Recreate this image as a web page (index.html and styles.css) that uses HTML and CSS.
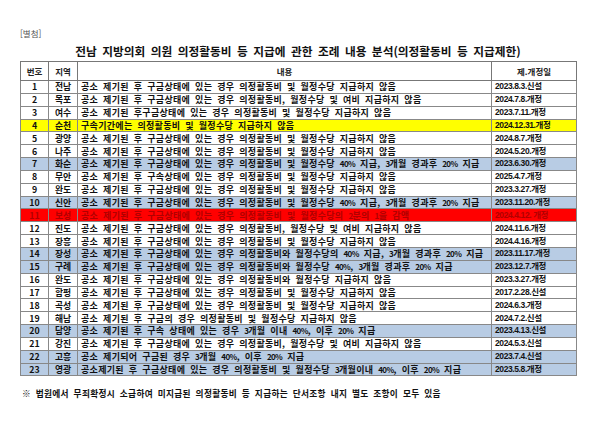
FILE: index.html
```html
<!DOCTYPE html>
<html lang="ko">
<head>
<meta charset="utf-8">
<link rel="stylesheet" href="styles.css">
</head>
<body>
<div class="page">
  <div class="attach">[별첨]</div>
  <h1 class="title">전남 지방의회 의원 의정활동비 등 지급에 관한 조례 내용 분석(의정활동비 등 지급제한)</h1>
  <table class="tbl">
    <colgroup>
      <col class="c-no"><col class="c-reg"><col class="c-txt"><col class="c-date">
    </colgroup>
    <thead>
      <tr><th>번호</th><th>지역</th><th>내용</th><th>제.개정일</th></tr>
    </thead>
    <tbody>
      <tr><td class="no">1</td><td class="reg">전남</td><td class="txt">공소 제기된 후 구금상태에 있는 경우 의정활동비 및 월정수당 지급하지 않음</td><td class="date">2023.8.3.신설</td></tr>
      <tr><td class="no">2</td><td class="reg">목포</td><td class="txt">공소 제기된 후 구금상태에 있는 경우 의정활동비, 월정수당 및 여비 지급하지 않음</td><td class="date">2024.7.8.개정</td></tr>
      <tr><td class="no">3</td><td class="reg">여수</td><td class="txt">공소 제기된 후구금상태에 있는 경우 의정활동비 및 월정수당 지급하지 않음</td><td class="date">2023.7.11.개정</td></tr>
      <tr class="yellow"><td class="no">4</td><td class="reg">순천</td><td class="txt">구속기간에는 의정활동비 및 월정수당 지급하지 않음</td><td class="date">2024.12.31.개정</td></tr>
      <tr><td class="no">5</td><td class="reg">광양</td><td class="txt">공소 제기된 후 구금상태에 있는 경우 의정활동비 및 월정수당 지급하지 않음</td><td class="date">2024.8.7.개정</td></tr>
      <tr><td class="no">6</td><td class="reg">나주</td><td class="txt">공소 제기된 후 구금상태에 있는 경우 의정활동비 및 월정수당 지급하지 않음</td><td class="date">2024.5.20.개정</td></tr>
      <tr class="blue"><td class="no">7</td><td class="reg">화순</td><td class="txt">공소 제기된 후 구금상태에 있는 경우 의정활동비 및 월정수당 <span class="n">40%</span> 지급, <span class="n">3</span>개월 경과후 <span class="n">20%</span> 지급</td><td class="date">2023.6.30.개정</td></tr>
      <tr><td class="no">8</td><td class="reg">무안</td><td class="txt">공소 제기된 후 구속상태에 있는 경우 의정활동비 및 월정수당 지급하지 않음</td><td class="date">2025.4.7.개정</td></tr>
      <tr><td class="no">9</td><td class="reg">완도</td><td class="txt">공소 제기된 후 구금상태에 있는 경우 의정활동비 및 월정수당 지급하지 않음</td><td class="date">2023.3.27.개정</td></tr>
      <tr class="blue"><td class="no">10</td><td class="reg">신안</td><td class="txt">공소 제기된 후 구금상태에 있는 경우 의정활동비 및 월정수당 <span class="n">40%</span> 지급, <span class="n">3</span>개월 경과후 <span class="n">20%</span> 지급</td><td class="date">2023.11.20.개정</td></tr>
      <tr class="red"><td class="no">11</td><td class="reg">보성</td><td class="txt">공소 제기된 후 구금상태에 있는 경우 의정활동비 및 월정수당의 <span class="n">2</span>분의 <span class="n">1</span>을 감액</td><td class="date">2024.4.12. 개정</td></tr>
      <tr><td class="no">12</td><td class="reg">진도</td><td class="txt">공소 제기된 후 구금상태에 있는 경우 의정활동비, 월정수당 및 여비 지급하지 않음</td><td class="date">2024.11.6.개정</td></tr>
      <tr><td class="no">13</td><td class="reg">장흥</td><td class="txt">공소 제기된 후 구금상태에 있는 경우 의정활동비 및 월정수당 지급하지 않음</td><td class="date">2024.4.16.개정</td></tr>
      <tr class="blue"><td class="no">14</td><td class="reg">장성</td><td class="txt">공소 제기된 후 구금상태에 있는 경우 의정활동비와 월정수당의 <span class="n">40%</span> 지급, <span class="n">3</span>개월 경과후 <span class="n">20%</span> 지급</td><td class="date">2023.11.17.개정</td></tr>
      <tr class="blue"><td class="no">15</td><td class="reg">구례</td><td class="txt">공소 제기된 후 구금상태에 있는 경우 의정활동비와 월정수당 <span class="n">40%</span>, <span class="n">3</span>개월 경과후 <span class="n">20%</span> 지급</td><td class="date">2023.12.7.개정</td></tr>
      <tr><td class="no">16</td><td class="reg">완도</td><td class="txt">공소 제기된 후 구금상태에 있는 경우 의정활동비와 월정수당 지급하지 않음</td><td class="date">2023.3.27.개정</td></tr>
      <tr><td class="no">17</td><td class="reg">함평</td><td class="txt">공소 제기된 후 구금상태에 있는 경우 의정활동비 및 월정수당 지급하지 않음</td><td class="date">2017.2.28.신설</td></tr>
      <tr><td class="no">18</td><td class="reg">곡성</td><td class="txt">공소 제기된 후 구금상태에 있는 경우 의정활동비 및 월정수당 지급하지 않음</td><td class="date">2024.6.3.개정</td></tr>
      <tr><td class="no">19</td><td class="reg">해남</td><td class="txt">공소 제기된 후 구금의 경우 의정활동비 및 월정수당 지급하지 않음</td><td class="date">2024.7.2.신설</td></tr>
      <tr class="blue"><td class="no">20</td><td class="reg">담양</td><td class="txt">공소 제기된 후 구속 상태에 있는 경우 <span class="n">3</span>개월 이내 <span class="n">40%</span>, 이후 <span class="n">20%</span> 지급</td><td class="date">2023.4.13.신설</td></tr>
      <tr><td class="no">21</td><td class="reg">강진</td><td class="txt">공소 제기된 후 구금상태에 있는 경우 의정활동비, 월정수당 및 여비 지급하지 않음</td><td class="date">2024.5.3.신설</td></tr>
      <tr class="blue"><td class="no">22</td><td class="reg">고흥</td><td class="txt">공소 제기되어 구금된 경우 <span class="n">3</span>개월 <span class="n">40%</span>, 이후 <span class="n">20%</span> 지급</td><td class="date">2023.7.4.신설</td></tr>
      <tr class="blue"><td class="no">23</td><td class="reg">영광</td><td class="txt">공소제기된 후 구금상태에 있는 경우 의정활동비 및 월정수당 <span class="n">3</span>개월이내 <span class="n">40%</span>, 이후 <span class="n">20%</span> 지급</td><td class="date">2023.5.8.개정</td></tr>
    </tbody>
  </table>
  <p class="note">※ 법원에서 무죄확정시 소급하여 미지급된 의정활동비 등 지급하는 단서조항 내지 별도 조항이 모두 있음</p>
</div>
</body>
</html>
```

FILE: styles.css
```css
html, body {
  margin: 0;
  padding: 0;
  background: #ffffff;
}

.page {
  padding: 28px 0 0 20px;
  width: 556px;
  font-family: "Noto Sans CJK KR", "Noto Sans", sans-serif;
  color: #111;
}

.attach {
  font-size: 8.5px;
  line-height: 11px;
  color: #555;
  font-weight: 400;
}

.title {
  margin: 2px 0 0 0;
  font-size: 11.7px;
  line-height: 20px;
  font-weight: 700;
  text-align: center;
  word-spacing: 2.2px;
  color: #111;
}

.tbl {
  margin-top: 0;
  width: 556px;
  border-collapse: collapse;
  table-layout: fixed;
  border: 1px solid #555;
  font-size: 8.8px;
  font-weight: 700;
}

.c-no { width: 28px; }
.c-reg { width: 29px; }
.c-txt { width: 414px; }
.c-date { width: 85px; }

.tbl th {
  height: 18px;
  padding: 0;
  border: 1px solid #777;
  font-weight: 700;
  font-size: 8.5px;
  text-align: center;
  color: #222;
}

.tbl td {
  height: 11.85px;
  padding: 0;
  border: 1px solid #888;
  line-height: 11px;
  white-space: nowrap;
  overflow: hidden;
}

.tbl td.no { text-align: center; }
.tbl td.reg { text-align: center; }
.tbl td.txt {
  padding-left: 3px;
  font-size: 9px;
  letter-spacing: 0.3px;
  word-spacing: 2.1px;
}
.tbl td.txt .n {
  font-size: 8px;
  letter-spacing: -0.6px;
}
.tbl td.date {
  padding-left: 3px;
  font-family: "Liberation Sans", "Noto Sans CJK KR", sans-serif;
  font-size: 8.5px;
  letter-spacing: -0.4px;
}

.yellow td { background: #ffff00; }
.blue td { background: #b8cce4; }
.red td { background: #ff0000; color: #b00000; }

.note {
  margin: 11px 0 0 2px;
  font-size: 8.7px;
  font-weight: 700;
  word-spacing: 2px;
  letter-spacing: 0.3px;
}
```
